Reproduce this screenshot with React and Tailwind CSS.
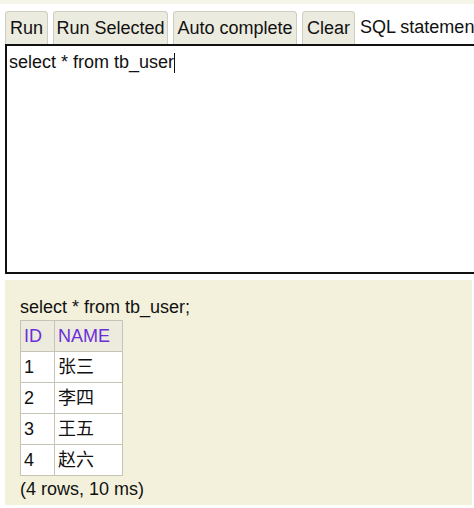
import React from 'react'

const rows = [
  { id: 1, name: '张三' },
  { id: 2, name: '李四' },
  { id: 3, name: '王五' },
  { id: 4, name: '赵六' },
]

const font = { fontFamily: '"Liberation Sans", "Noto Sans CJK SC", sans-serif' }

function TabButton({ children, className = '' }) {
  return (
    <button
      className={`h-[33px] px-0 bg-[#ecebdf] border border-[#cfcdbf] border-b-0 rounded-t-[4px] text-[18px] text-[#111] leading-none whitespace-nowrap ${className}`}
    >
      {children}
    </button>
  )
}

export default function App() {
  return (
    <div className="w-[474px] h-[508px] bg-white overflow-hidden text-[#111]" style={font}>
      <div className="h-[4px] bg-[#f6f5ea]" />
      <div className="pl-[5px] pt-[7px] w-[520px]">
        {/* toolbar */}
        <div className="flex items-end gap-[5px]">
          <TabButton className="w-[43px]">Run</TabButton>
          <TabButton className="w-[115px]">Run Selected</TabButton>
          <TabButton className="w-[124px]">Auto complete</TabButton>
          <TabButton className="w-[53px]">Clear</TabButton>
          <span className="text-[18px] leading-[33px] whitespace-nowrap">SQL statement</span>
        </div>

        {/* editor */}
        <div className="h-[230px] border-2 border-[#111] bg-white px-[2px] pt-[5px] text-[18px] leading-[22px] whitespace-pre">
          select * from tb_user<span className="inline-block w-px h-[20px] bg-[#111] align-middle" />
        </div>

        {/* result */}
        <div className="mt-[6px] w-[467px] h-[225px] bg-[#f3f1dc] pl-[15px] pt-[16px]">
          <div className="text-[18px] leading-[22px]">select * from tb_user;</div>
          <table className="mt-[2px] border-collapse text-[18px]">
            <thead>
              <tr className="bg-[#ecebdd]">
                <th className="h-[31px] w-[34px] border border-[#c6c4b4] px-[3px] text-left font-normal text-[#6a2fd8]">ID</th>
                <th className="h-[31px] w-[68px] border border-[#c6c4b4] px-[3px] text-left font-normal text-[#6a2fd8]">NAME</th>
              </tr>
            </thead>
            <tbody>
              {rows.map(r => (
                <tr key={r.id} className="bg-white">
                  <td className="h-[31px] border border-[#c6c4b4] px-[3px]">{r.id}</td>
                  <td className="h-[31px] border border-[#c6c4b4] px-[3px]">{r.name}</td>
                </tr>
              ))}
            </tbody>
          </table>
          <div className="mt-[2px] text-[18px] leading-[22px]">(4 rows, 10 ms)</div>
        </div>
      </div>
    </div>
  )
}
